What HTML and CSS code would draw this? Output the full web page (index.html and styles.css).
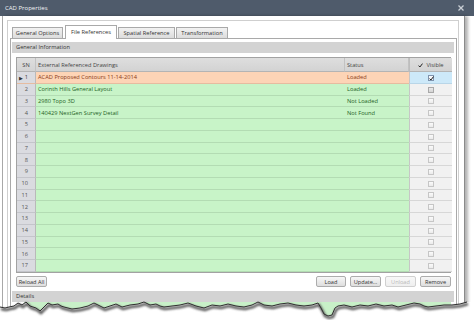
FILE: index.html
```html
<!DOCTYPE html>
<html lang="en">
<head>
    <meta charset="UTF-8">
    <title>CAD Properties</title>
    <link rel="stylesheet" href="styles.css">
</head>
<body>
    <div class="titlebar">
        <span class="title">CAD Properties</span>
        <svg class="close" width="6" height="6" viewBox="0 0 6 6"><path d="M0.5 0.5 L5.5 5.5 M5.5 0.5 L0.5 5.5" stroke="#c9cfd6" stroke-width="1.3"/></svg>
    </div>
    <div class="window">
        <div class="frame">
            <div class="tabs">
                <div class="tab t1">General Options</div>
                <div class="tab t2 active">File References</div>
                <div class="tab t3">Spatial Reference</div>
                <div class="tab t4">Transformation</div>
            </div>
            <div class="panel">
                <div class="section-bar">General Information</div>
                <div class="grid">
                    <table>
                        <colgroup>
                            <col class="c-sn"><col class="c-name"><col class="c-status"><col class="c-vis">
                        </colgroup>
                        <thead>
                            <tr>
                                <th class="sn">SN</th>
                                <th>External Referenced Drawings</th>
                                <th>Status</th>
                                <th class="vis-head"><span class="hcheck"><svg width="5" height="5" viewBox="0 0 5 5"><path d="M0.6 2.6 L1.9 4 L4.5 0.6" fill="none" stroke="#222" stroke-width="1"/></svg></span>Visible</th>
                            </tr>
                        </thead>
                        <tbody>
                            <tr class="current">
                                <td class="sn"><span class="arrow">&#9654;</span>1</td>
                                <td>ACAD Proposed Contours 11-14-2014</td>
                                <td>Loaded</td>
                                <td class="vis"><span class="box checked"><svg width="5" height="5" viewBox="0 0 5 5"><path d="M0.6 2.6 L1.9 4 L4.5 0.6" fill="none" stroke="#1a1a1a" stroke-width="1"/></svg></span></td>
                            </tr>
                            <tr><td class="sn">2</td><td>Corinth Hills General Layout</td><td>Loaded</td><td class="vis"><span class="box dark"></span></td></tr>
                            <tr><td class="sn">3</td><td>2980 Topo 3D</td><td>Not Loaded</td><td class="vis"><span class="box"></span></td></tr>
                            <tr><td class="sn">4</td><td>140429 NextGen Survey Detail</td><td>Not Found</td><td class="vis"><span class="box"></span></td></tr>
                            <tr><td class="sn">5</td><td></td><td></td><td class="vis"><span class="box"></span></td></tr>
                            <tr><td class="sn">6</td><td></td><td></td><td class="vis"><span class="box"></span></td></tr>
                            <tr><td class="sn">7</td><td></td><td></td><td class="vis"><span class="box"></span></td></tr>
                            <tr><td class="sn">8</td><td></td><td></td><td class="vis"><span class="box"></span></td></tr>
                            <tr><td class="sn">9</td><td></td><td></td><td class="vis"><span class="box"></span></td></tr>
                            <tr><td class="sn">10</td><td></td><td></td><td class="vis"><span class="box"></span></td></tr>
                            <tr><td class="sn">11</td><td></td><td></td><td class="vis"><span class="box"></span></td></tr>
                            <tr><td class="sn">12</td><td></td><td></td><td class="vis"><span class="box"></span></td></tr>
                            <tr><td class="sn">13</td><td></td><td></td><td class="vis"><span class="box"></span></td></tr>
                            <tr><td class="sn">14</td><td></td><td></td><td class="vis"><span class="box"></span></td></tr>
                            <tr><td class="sn">15</td><td></td><td></td><td class="vis"><span class="box"></span></td></tr>
                            <tr><td class="sn">16</td><td></td><td></td><td class="vis"><span class="box"></span></td></tr>
                            <tr><td class="sn">17</td><td></td><td></td><td class="vis"><span class="box"></span></td></tr>
                        </tbody>
                    </table>
                </div>
                <div class="actions">
                    <button class="btn reload">Reload All</button>
                    <div class="btn-group">
                        <button class="btn w30">Load</button>
                        <button class="btn">Update...</button>
                        <button class="btn" disabled>Unload</button>
                        <button class="btn">Remove</button>
                    </div>
                </div>
                <div class="section-bar details-bar">Details</div>
                <div class="details"></div>
            </div>
        </div>
    </div>
    <svg class="torn" width="474" height="24" viewBox="0 0 474 24">
        <defs>
            <filter id="soft" x="-5%" y="-50%" width="110%" height="200%"><feGaussianBlur stdDeviation="1.2"/></filter>
        </defs>
        <path class="paper" d="M0,11 L5,12 L9,11 L14,10 L18,7 L22,9 L26,6 L30,10 L33,11 L36,12 L40,15 L44,11 L48,7 L52,9 L58,8 L61,10 L64,11 L68,12 L72,13 L80,12 L84,11 L88,10 L94,7 L98,9 L104,12 L110,10 L116,8 L122,11 L126,10 L130,9 L138,8 L144,6 L150,9 L156,8 L160,10 L164,11 L172,10 L180,9 L188,7 L196,10 L200,11 L204,12 L212,9 L220,10 L228,8 L236,10 L244,11 L252,9 L258,6 L264,9 L272,10 L280,8 L288,7 L296,9 L304,10 L312,9 L318,7 L321,12 L324,18 L328,20 L332,19 L335,12 L338,10 L344,9 L352,11 L360,9 L368,10 L376,8 L384,10 L392,9 L398,11 L406,9 L414,7 L420,8 L424,10 L428,11 L436,10 L444,9 L452,9 L460,8 L467,6 L474,6 L474,24 L0,24 Z"/>
        <path class="shadow" d="M0,11 L5,12 L9,11 L14,10 L18,7 L22,9 L26,6 L30,10 L33,11 L36,12 L40,15 L44,11 L48,7 L52,9 L58,8 L61,10 L64,11 L68,12 L72,13 L80,12 L84,11 L88,10 L94,7 L98,9 L104,12 L110,10 L116,8 L122,11 L126,10 L130,9 L138,8 L144,6 L150,9 L156,8 L160,10 L164,11 L172,10 L180,9 L188,7 L196,10 L200,11 L204,12 L212,9 L220,10 L228,8 L236,10 L244,11 L252,9 L258,6 L264,9 L272,10 L280,8 L288,7 L296,9 L304,10 L312,9 L318,7 L321,12 L324,18 L328,20 L332,19 L335,12 L338,10 L344,9 L352,11 L360,9 L368,10 L376,8 L384,10 L392,9 L398,11 L406,9 L414,7 L420,8 L424,10 L428,11 L436,10 L444,9 L452,9 L460,8 L467,6"/>
        <path class="edge" d="M0,11 L5,12 L9,11 L14,10 L18,7 L22,9 L26,6 L30,10 L33,11 L36,12 L40,15 L44,11 L48,7 L52,9 L58,8 L61,10 L64,11 L68,12 L72,13 L80,12 L84,11 L88,10 L94,7 L98,9 L104,12 L110,10 L116,8 L122,11 L126,10 L130,9 L138,8 L144,6 L150,9 L156,8 L160,10 L164,11 L172,10 L180,9 L188,7 L196,10 L200,11 L204,12 L212,9 L220,10 L228,8 L236,10 L244,11 L252,9 L258,6 L264,9 L272,10 L280,8 L288,7 L296,9 L304,10 L312,9 L318,7 L321,12 L324,18 L328,20 L332,19 L335,12 L338,10 L344,9 L352,11 L360,9 L368,10 L376,8 L384,10 L392,9 L398,11 L406,9 L414,7 L420,8 L424,10 L428,11 L436,10 L444,9 L452,9 L460,8 L467,6"/>
    </svg>
</body>
</html>
```

FILE: styles.css
```css
body {
    margin: 0;
    width: 474px;
    height: 320px;
    overflow: hidden;
    position: relative;
    background-color: #fff;
    font-family: "Open Sans", "Noto Sans", sans-serif;
    font-size: 5.7px;
    color: #333;
}

.titlebar {
    height: 16px;
    background-color: #4f5b6b;
    display: flex;
    align-items: center;
    justify-content: space-between;
    padding: 0 10px 0 5px;
}

.title {
    color: #f2f4f7;
    font-size: 6px;
}

.close {
    display: block;
}

.window {
    margin-left: 2px;
    width: 463px;
    height: 304px;
    padding-top: 4px;
    box-sizing: border-box;
    background-color: #fff;
    border-left: 1px solid #a8a8a8;
    border-right: 1px solid #8a8a8a;
    box-shadow: 3px 0 3px rgba(0, 0, 0, 0.3);
}

.frame {
    margin: 0 5px 0 4px;
    border: 1px solid #cfcfcf;
    border-bottom: none;
    padding: 5px 1px 0 2px;
    height: 290px;
}

.tabs {
    display: flex;
    align-items: flex-end;
    height: 12px;
    margin-left: 2px;
}

.tab {
    height: 11px;
    box-sizing: border-box;
    border: 1px solid #a9a9a9;
    border-bottom: none;
    background: linear-gradient(#f2f2f2, #dcdcdc);
    text-align: center;
    line-height: 10px;
    color: #333;
    white-space: nowrap;
    overflow: hidden;
}

.t1 { width: 51px; }
.t2 { width: 52px; margin-left: 2px; }
.t3 { width: 57px; margin-left: 1px; }
.t4 { width: 52px; margin-left: 1px; }

.tab.active {
    height: 14px;
    margin-bottom: -1px;
    background: #fff;
    position: relative;
    z-index: 1;
    line-height: 12px;
}

.panel {
    border: 1px solid #a9a9a9;
    border-bottom: none;
    padding: 3px 2px 0 1px;
    height: 280px;
    background-color: #fff;
}

.section-bar {
    height: 11px;
    line-height: 11px;
    background-color: #d3d3d3;
    padding-left: 4px;
    color: #333;
}

.grid {
    margin: 4px 3px 0 4px;
    border: 1px solid #a2a2a2;
    height: 216px;
    box-sizing: border-box;
    background-color: #c8f4c8;
}

table {
    width: 100%;
    table-layout: fixed;
    border-collapse: separate;
    border-spacing: 0;
}

.c-sn { width: 19px; }
.c-name { width: 309px; }
.c-status { width: 64px; }
.c-vis { width: 43px; }

th {
    height: 14px;
    box-sizing: border-box;
    background: linear-gradient(#dedede, #d3d3d3);
    font-weight: normal;
    text-align: left;
    padding: 0 2px;
    border-right: 1px solid #c2c2c2;
    border-bottom: 1px solid #b4b4b4;
    color: #444;
    white-space: nowrap;
}

th:last-child {
    border-right: none;
}

th.sn {
    text-align: center;
    padding: 0;
}

th.vis-head {
    text-align: center;
    border-left: 1px solid #bdbdbd;
}

.hcheck {
    display: inline-block;
    vertical-align: -1px;
    margin-right: 3px;
}

.hcheck svg {
    display: block;
}

tbody tr {
    height: 11.75px;
}

td {
    padding: 0 0 0 2px;
    background-color: #c8f4c8;
    border-bottom: 1px solid #b3dcb3;
    color: #255f25;
    white-space: nowrap;
    overflow: hidden;
    line-height: 10px;
}

td.sn {
    background-color: #dadbe0;
    border-bottom: 1px solid #c4c5cb;
    border-right: 1px solid #b9b9b9;
    text-align: right;
    padding: 0 7px 0 0;
    color: #555;
    position: relative;
}

.arrow {
    position: absolute;
    left: 2px;
    top: 1px;
    font-size: 5px;
    color: #333;
}

tr.current td {
    background-color: #fdd4b6;
    border-bottom-color: #e6bca0;
    color: #8a3b16;
}

tr.current td.sn {
    background-color: #dadbe0;
    color: #444;
}

td.vis {
    background-color: #f1f1f1;
    border-left: 1px solid #c6c6c6;
    border-bottom: 1px solid #d7d7d7;
    text-align: center;
    padding: 0;
}

tr.current td.vis {
    background-color: #cde9f9;
    border-bottom-color: #b9d6e8;
}

.box {
    display: inline-block;
    width: 6px;
    height: 6px;
    box-sizing: border-box;
    border: 1px solid #c6c6c6;
    background: linear-gradient(#fbfbfb, #ebebeb);
    vertical-align: middle;
}

.box.dark {
    border-color: #a9a9a9;
    background: linear-gradient(#eaeaea, #d4d4d4);
}

.box.checked {
    border-color: #7f93ad;
    background: #f6f9fc;
    position: relative;
}

.box.checked svg {
    position: absolute;
    left: 0;
    top: 0;
}

.actions {
    display: flex;
    justify-content: space-between;
    margin: 3px 3px 0 4px;
}

.btn {
    height: 11px;
    width: 31px;
    padding: 0;
    border: 1px solid #acacac;
    border-radius: 2px;
    background: linear-gradient(#f7f7f7, #dedede);
    font-family: "Open Sans", "Noto Sans", sans-serif;
    font-size: 5.6px;
    color: #333;
    white-space: nowrap;
    overflow: hidden;
}

.btn:disabled {
    color: #b9b9b9;
    border-color: #d0d0d0;
    background: linear-gradient(#f8f8f8, #efefef);
}

.btn.w30 {
    width: 30px;
}

.btn-group {
    display: flex;
    gap: 4px;
}

.details-bar {
    margin-top: 4px;
}

.details {
    height: 20px;
    margin: 0 3px 0 12px;
    background-color: #c8f0c8;
}

.torn {
    position: absolute;
    left: 0;
    top: 296px;
}

.paper {
    fill: #fff;
}

.shadow {
    fill: none;
    stroke: #555;
    stroke-width: 2.5;
    filter: url(#soft);
    transform: translate(1px, 2px);
}

.edge {
    fill: none;
    stroke: #2e2e2e;
    stroke-width: 1;
}
```
